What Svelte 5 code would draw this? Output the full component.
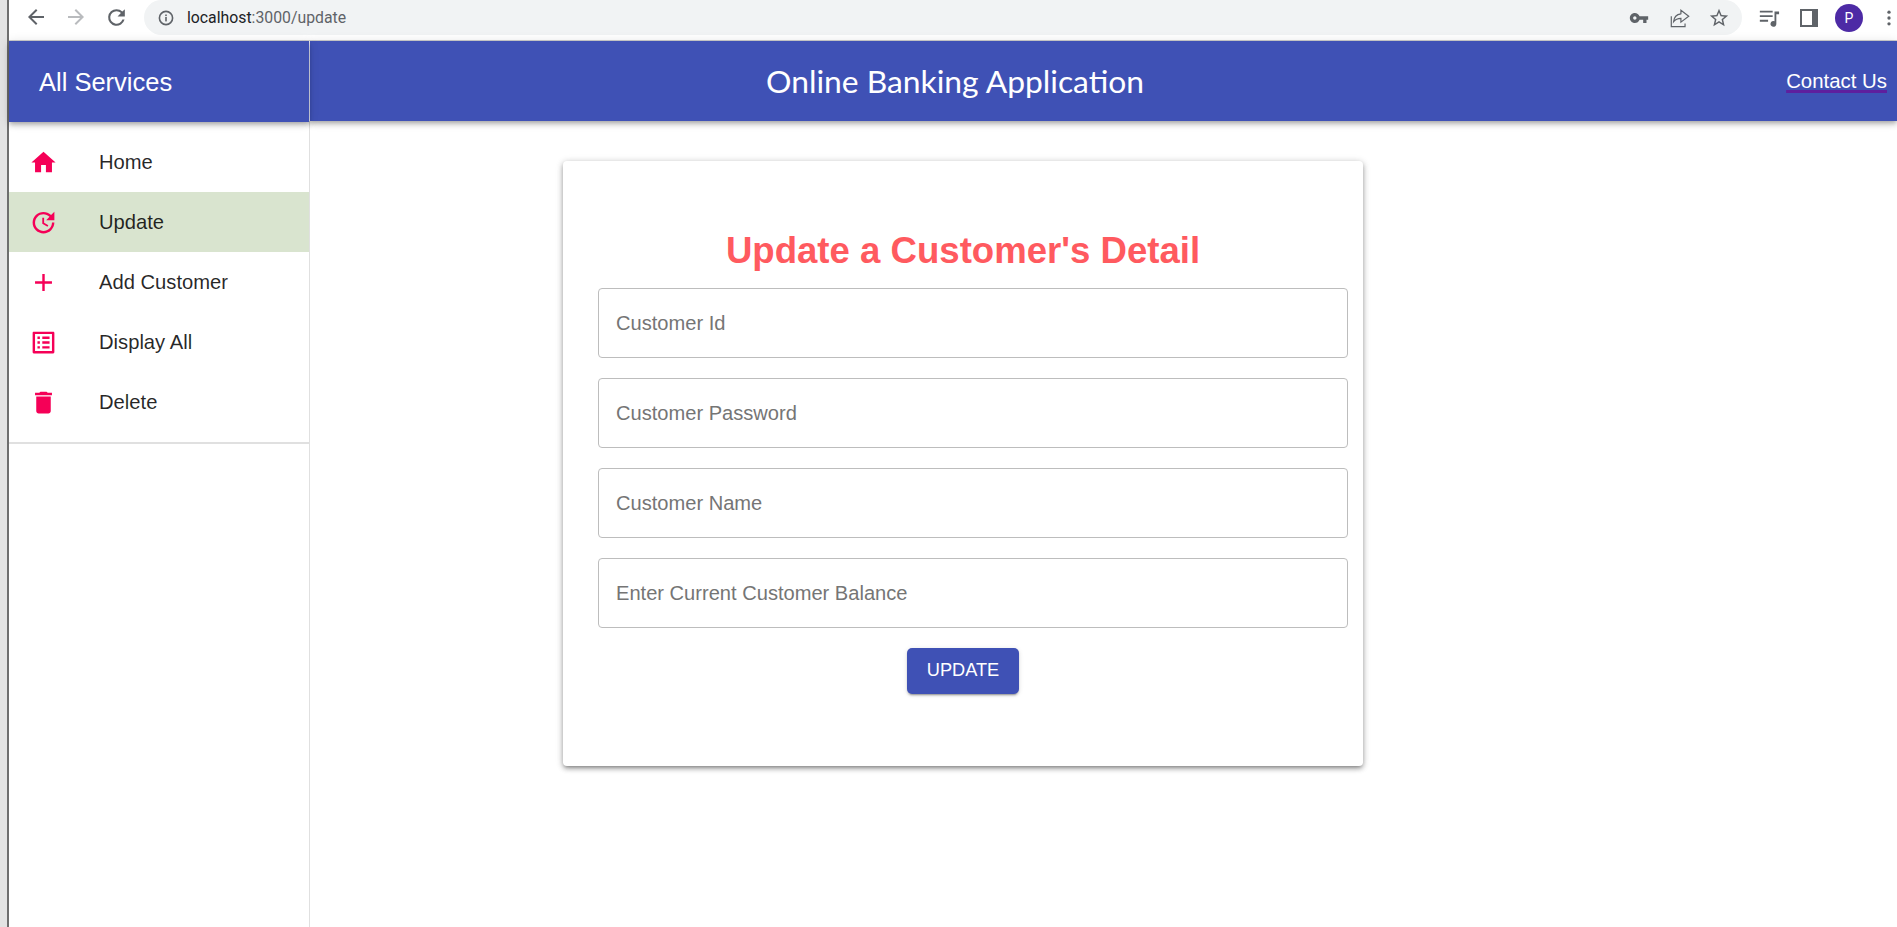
<script lang="ts">
  const items = [
    { label: "Home", d: "M10 20v-6h4v6h5v-8h3L12 3 2 12h3v8z" },
    {
      label: "Update",
      active: true,
      d: "M21 10.12h-6.78l2.74-2.82c-2.73-2.7-7.15-2.8-9.88-.1-2.73 2.71-2.73 7.08 0 9.79s7.15 2.71 9.88 0C18.32 15.65 19 14.08 19 12.1h2c0 1.98-.88 4.55-2.64 6.29-3.51 3.48-9.21 3.48-12.72 0-3.5-3.47-3.53-9.11-.02-12.58s9.14-3.47 12.65 0L21 3v7.12zM12.5 8v4.25l3.5 2.08-.72 1.21L11 13V8h1.5z",
    },
    { label: "Add Customer", d: "M19 13h-6v6h-2v-6H5v-2h6V5h2v6h6v2z" },
    {
      label: "Display All",
      d: "M19 5v14H5V5h14m1.1-2H3.9c-.5 0-.9.4-.9.9v16.2c0 .4.4.9.9.9h16.2c.4 0 .9-.5.9-.9V3.9c0-.5-.5-.9-.9-.9zM11 7h6v2h-6V7zm0 4h6v2h-6v-2zm0 4h6v2h-6zM7 7h2v2H7zm0 4h2v2H7zm0 4h2v2H7z",
    },
    { label: "Delete", d: "M6 19c0 1.1.9 2 2 2h8c1.1 0 2-.9 2-2V7H6v12zM19 4h-3.5l-1-1h-5l-1 1H5v2h14V4z" },
  ];
  const fields = ["Customer Id", "Customer Password", "Customer Name", "Enter Current Customer Balance"];
</script>

<div class="window">
  <div class="strip"></div>
  <div class="page">
    <div class="chrome">
      <svg class="nav back" viewBox="0 0 24 24"><path d="M20 11H7.83l5.59-5.59L12 4l-8 8 8 8 1.41-1.41L7.83 13H20z" /></svg>
      <svg class="nav fwd" viewBox="0 0 24 24"><path d="M4 11h12.17l-5.59-5.59L12 4l8 8-8 8-1.41-1.41L16.17 13H4z" /></svg>
      <svg class="nav reload" viewBox="0 0 24 24"><path d="M17.65 6.35A7.96 7.96 0 0 0 12 4a8 8 0 1 0 7.73 10h-2.08A6 6 0 1 1 12 6c1.66 0 3.14.69 4.22 1.78L13 11h7V4z" /></svg>
      <div class="omnibox">
        <svg class="info" viewBox="0 0 16 16">
          <circle cx="8" cy="8" r="6.6" fill="none" stroke="#5f6368" stroke-width="1.6" />
          <rect x="7.2" y="7" width="1.6" height="4.4" fill="#5f6368" />
          <rect x="7.2" y="4.5" width="1.6" height="1.6" fill="#5f6368" />
        </svg>
        <span class="url"><b>localhost</b>:3000/update</span>
        <div class="omni-icons">
          <svg class="key" viewBox="0 0 24 24"><path d="M12.65 10C11.83 7.67 9.61 6 7 6c-3.31 0-6 2.69-6 6s2.69 6 6 6c2.61 0 4.83-1.67 5.65-4H17v4h4v-4h2v-4H12.65zM7 14c-1.1 0-2-.9-2-2s.9-2 2-2 2 .9 2 2-.9 2-2 2z" /></svg>
          <svg class="share" viewBox="0 0 24 24"><path fill="none" stroke="#5f6368" stroke-width="1.3" d="M13 8V3.5l8.5 6.5-8.5 6.5v-4c-3.6 0-6 1-8 3.6.4-4.4 3-8 8-8.6zM2.5 10v11.5h15V18" /></svg>
          <svg class="star" viewBox="0 0 24 24"><path d="M22 9.24l-7.19-.62L12 2 9.19 8.63 2 9.24l5.46 4.73L5.82 21 12 17.27 18.18 21l-1.63-7.03L22 9.24zM12 15.4l-3.76 2.27 1-4.28-3.32-2.88 4.38-.38L12 6.1l1.71 4.04 4.38.38-3.32 2.88 1 4.28L12 15.4z" /></svg>
        </div>
      </div>
      <div class="tools">
        <svg class="queue" viewBox="0 0 24 24"><path d="M2 4h14v2H2zM2 9h14v2H2zM2 14h9v2H2zM18 5h5v3h-3v10.5a3.2 3.2 0 1 1-2-3z" /></svg>
        <svg class="panel" viewBox="0 0 24 24"><path fill-rule="evenodd" d="M3 3h18v18H3zM5 5v14h10V5z" /></svg>
        <div class="avatar">P</div>
        <svg class="dots" viewBox="0 0 6 24"><circle cx="3" cy="5" r="2" /><circle cx="3" cy="12" r="2" /><circle cx="3" cy="19" r="2" /></svg>
      </div>
    </div>

    <div class="body">
      <aside class="sidebar">
        <div class="side-head">All Services</div>
        <nav class="menu">
          {#each items as item}
            <div class="row {item.active ? 'active' : ''}">
              <svg class="row-icon" viewBox="0 0 24 24"><path d={item.d} /></svg>
              <span>{item.label}</span>
            </div>
          {/each}
        </nav>
        <div class="divider"></div>
      </aside>

      <main class="main">
        <header class="topbar">
          <div class="app-title">Online Banking Application</div>
          <a class="contact" href="#contact">Contact Us</a>
        </header>
        <section class="card">
          <h1>Update a Customer's Detail</h1>
          <div class="fields">
            {#each fields as field}
              <input type="text" placeholder={field} />
            {/each}
          </div>
          <button class="submit">UPDATE</button>
        </section>
      </main>
    </div>
  </div>
</div>

<style>
  :global(body) {
    margin: 0;
    background: #fff;
    overflow: hidden;
  }
  .window {
    display: flex;
    height: 927px;
    font-family: "Liberation Sans", Arial, sans-serif;
  }
  .strip {
    width: 7px;
    flex: none;
    background: #e3e3e3;
    border-right: 2px solid #6e6e6e;
  }
  .page {
    flex: 1;
    min-width: 0;
    display: flex;
    flex-direction: column;
  }
  .chrome {
    height: 40px;
    flex: none;
    display: flex;
    align-items: flex-start;
    background: #fff;
    border-bottom: 1px solid #d0d0d0;
  }
  .nav {
    width: 24px;
    height: 24px;
    margin-top: 5px;
    flex: none;
    fill: #5f6368;
  }
  .back {
    margin-left: 15px;
  }
  .fwd {
    margin-left: 16px;
    fill: #b9bbbe;
  }
  .reload {
    margin-left: 16px;
    width: 25px;
    height: 25px;
  }
  .omnibox {
    margin-left: 15px;
    width: 1598px;
    height: 35px;
    flex: none;
    display: flex;
    align-items: center;
    background: #f1f3f4;
    border-radius: 18px;
  }
  .info {
    width: 16px;
    height: 16px;
    margin-left: 14px;
  }
  .url {
    margin-left: 13px;
    font-family: Roboto, "Liberation Sans", sans-serif;
    font-size: 15.8px;
    color: #5f6368;
  }
  .url b {
    font-weight: 400;
    color: #202124;
  }
  .omni-icons {
    margin-left: auto;
    margin-right: 12px;
    display: flex;
    align-items: center;
  }
  .omni-icons svg {
    fill: #5f6368;
  }
  .key {
    width: 20px;
    height: 20px;
  }
  .share {
    width: 22px;
    height: 22px;
    margin-left: 20px;
  }
  .star {
    width: 22px;
    height: 22px;
    margin-left: 17px;
  }
  .tools {
    display: flex;
    align-items: center;
    height: 35px;
    margin-left: 16px;
  }
  .tools svg {
    fill: #5f6368;
  }
  .queue {
    width: 22px;
    height: 22px;
  }
  .panel {
    width: 24px;
    height: 24px;
    margin-left: 17px;
  }
  .avatar {
    width: 28px;
    height: 28px;
    margin-left: 14px;
    border-radius: 50%;
    background: #4d2aa5;
    color: #fff;
    font-family: Roboto, sans-serif;
    font-size: 14px;
    display: flex;
    align-items: center;
    justify-content: center;
  }
  .dots {
    width: 6px;
    height: 20px;
    margin-left: 23px;
    flex: none;
  }
  .body {
    flex: 1;
    display: flex;
    min-height: 0;
  }
  .sidebar {
    width: 300px;
    flex: none;
    border-right: 1px solid #e0e0e0;
    background: #fff;
  }
  .side-head {
    height: 81px;
    display: flex;
    align-items: center;
    padding-left: 30px;
    padding-top: 2px;
    box-sizing: border-box;
    background: #3f51b5;
    color: #fff;
    font-size: 25.5px;
    box-shadow: 0 2px 4px -1px rgba(0, 0, 0, 0.2), 0 4px 5px rgba(0, 0, 0, 0.14), 0 1px 10px rgba(0, 0, 0, 0.12);
    position: relative;
  }
  .menu {
    padding-top: 10px;
  }
  .row {
    height: 60px;
    display: flex;
    align-items: center;
    color: rgba(0, 0, 0, 0.85);
    font-size: 20.2px;
  }
  .row.active {
    background: #d9e4cf;
  }
  .row-icon {
    width: 29px;
    height: 29px;
    margin-left: 20px;
    margin-right: 41px;
    fill: #f50057;
    flex: none;
  }
  .divider {
    margin-top: 10px;
    height: 2px;
    background: #e0e0e0;
  }
  .main {
    flex: 1;
    min-width: 0;
  }
  .topbar {
    height: 80px;
    display: flex;
    align-items: center;
    background: #3f51b5;
    color: #fff;
    border-left: 1px solid #dfe2f3;
    margin-left: -1px;
    box-shadow: 0 2px 4px -1px rgba(0, 0, 0, 0.2), 0 4px 5px rgba(0, 0, 0, 0.14), 0 1px 10px rgba(0, 0, 0, 0.12);
  }
  .app-title {
    margin-left: 456px;
    font-family: Lato, sans-serif;
    font-size: 31.8px;
  }
  .contact {
    margin-left: auto;
    margin-right: 10px;
    color: #fff;
    font-size: 20.4px;
    text-decoration: underline;
    text-decoration-color: #5e1f9e;
    text-decoration-thickness: 3px;
    text-underline-offset: 2px;
  }
  .card {
    width: 800px;
    height: 605px;
    margin: 40px 0 0 253px;
    box-sizing: border-box;
    padding-top: 67px;
    background: #fff;
    border-radius: 4px;
    box-shadow: 0 3px 3px -2px rgba(0, 0, 0, 0.2), 0 3px 4px rgba(0, 0, 0, 0.14), 0 1px 8px rgba(0, 0, 0, 0.12), 0 2px 6px rgba(0, 0, 0, 0.2);
    display: flex;
    flex-direction: column;
    align-items: center;
  }
  h1 {
    margin: 0;
    font-size: 36.6px;
    line-height: 46px;
    font-weight: 700;
    color: #ff5a5f;
  }
  .fields {
    align-self: flex-start;
    margin: 14px 0 0 35px;
    display: flex;
    flex-direction: column;
    gap: 20px;
  }
  input {
    width: 750px;
    height: 70px;
    box-sizing: border-box;
    padding: 0 17px;
    border: 1px solid #bdbdbd;
    border-radius: 4px;
    background: #fff;
    font-family: "Liberation Sans", Arial, sans-serif;
    font-size: 20.1px;
    outline: none;
  }
  input::placeholder {
    color: #757575;
    opacity: 1;
  }
  .submit {
    margin-top: 20px;
    width: 112px;
    height: 46px;
    border: none;
    border-radius: 5px;
    background: #3f51b5;
    color: #fff;
    font-family: "Liberation Sans", Arial, sans-serif;
    font-size: 18.2px;
    box-shadow: 0 3px 1px -2px rgba(0, 0, 0, 0.2), 0 2px 2px rgba(0, 0, 0, 0.14), 0 1px 5px rgba(0, 0, 0, 0.12);
    padding: 0 0 2px;
  }
</style>
